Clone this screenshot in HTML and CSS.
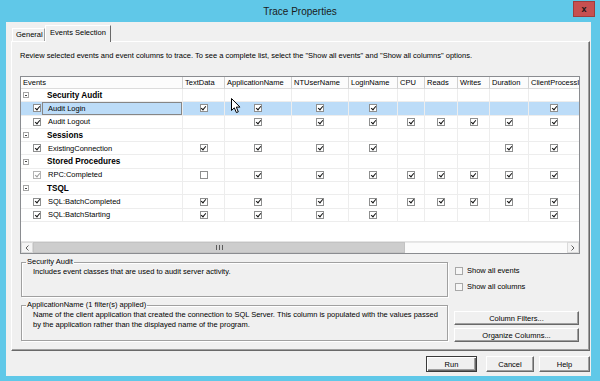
FILE: index.html
```html
<!DOCTYPE html>
<html lang="en">
<head>
    <meta charset="UTF-8">
    <title>Trace Properties</title>
    <link rel="stylesheet" href="styles.css">
</head>
<body>
    <div class="window">
        <div class="titlebar">
            <span class="title">Trace Properties</span>
            <span class="close">x</span>
        </div>

        <div class="client">
            <div class="tabs">
                <span class="tab">General</span>
                <span class="tab active">Events Selection</span>
            </div>

            <div class="panel">
                <p class="intro">Review selected events and event columns to trace. To see a complete list, select the "Show all events" and "Show all columns" options.</p>

                <!-- events / columns grid -->
                <div class="grid">
                    <div class="row head">
                        <div class="c">Events</div>
                        <div class="c">TextData</div>
                        <div class="c">ApplicationName</div>
                        <div class="c">NTUserName</div>
                        <div class="c">LoginName</div>
                        <div class="c">CPU</div>
                        <div class="c">Reads</div>
                        <div class="c">Writes</div>
                        <div class="c">Duration</div>
                        <div class="c">ClientProcessID</div>
                    </div>

                    <div class="row">
                        <div class="c ev"><span class="tog"></span><b class="cat">Security Audit</b></div>
                        <div class="c"></div><div class="c"></div><div class="c"></div><div class="c"></div><div class="c"></div><div class="c"></div><div class="c"></div><div class="c"></div><div class="c"></div>
                    </div>
                    <div class="row sel">
                        <div class="c ev item"><span class="cb on"></span><span class="name">Audit Login</span></div>
                        <div class="c"><span class="cb on"></span></div>
                        <div class="c"><span class="cb on"></span></div>
                        <div class="c"><span class="cb on"></span></div>
                        <div class="c"><span class="cb on"></span></div>
                        <div class="c"></div>
                        <div class="c"></div>
                        <div class="c"></div>
                        <div class="c"></div>
                        <div class="c"><span class="cb on"></span></div>
                    </div>
                    <div class="row">
                        <div class="c ev item"><span class="cb on"></span><span class="name">Audit Logout</span></div>
                        <div class="c"></div>
                        <div class="c"><span class="cb on"></span></div>
                        <div class="c"><span class="cb on"></span></div>
                        <div class="c"><span class="cb on"></span></div>
                        <div class="c"><span class="cb on"></span></div>
                        <div class="c"><span class="cb on"></span></div>
                        <div class="c"><span class="cb on"></span></div>
                        <div class="c"><span class="cb on"></span></div>
                        <div class="c"><span class="cb on"></span></div>
                    </div>

                    <div class="row">
                        <div class="c ev"><span class="tog"></span><b class="cat">Sessions</b></div>
                        <div class="c"></div><div class="c"></div><div class="c"></div><div class="c"></div><div class="c"></div><div class="c"></div><div class="c"></div><div class="c"></div><div class="c"></div>
                    </div>
                    <div class="row">
                        <div class="c ev item"><span class="cb on"></span><span class="name">ExistingConnection</span></div>
                        <div class="c"><span class="cb on"></span></div>
                        <div class="c"><span class="cb on"></span></div>
                        <div class="c"><span class="cb on"></span></div>
                        <div class="c"><span class="cb on"></span></div>
                        <div class="c"></div>
                        <div class="c"></div>
                        <div class="c"></div>
                        <div class="c"><span class="cb on"></span></div>
                        <div class="c"><span class="cb on"></span></div>
                    </div>

                    <div class="row">
                        <div class="c ev"><span class="tog"></span><b class="cat">Stored Procedures</b></div>
                        <div class="c"></div><div class="c"></div><div class="c"></div><div class="c"></div><div class="c"></div><div class="c"></div><div class="c"></div><div class="c"></div><div class="c"></div>
                    </div>
                    <div class="row">
                        <div class="c ev item"><span class="cb on off"></span><span class="name">RPC:Completed</span></div>
                        <div class="c"><span class="cb"></span></div>
                        <div class="c"><span class="cb on"></span></div>
                        <div class="c"><span class="cb on"></span></div>
                        <div class="c"><span class="cb on"></span></div>
                        <div class="c"><span class="cb on"></span></div>
                        <div class="c"><span class="cb on"></span></div>
                        <div class="c"><span class="cb on"></span></div>
                        <div class="c"><span class="cb on"></span></div>
                        <div class="c"><span class="cb on"></span></div>
                    </div>

                    <div class="row">
                        <div class="c ev"><span class="tog"></span><b class="cat">TSQL</b></div>
                        <div class="c"></div><div class="c"></div><div class="c"></div><div class="c"></div><div class="c"></div><div class="c"></div><div class="c"></div><div class="c"></div><div class="c"></div>
                    </div>
                    <div class="row">
                        <div class="c ev item"><span class="cb on"></span><span class="name">SQL:BatchCompleted</span></div>
                        <div class="c"><span class="cb on"></span></div>
                        <div class="c"><span class="cb on"></span></div>
                        <div class="c"><span class="cb on"></span></div>
                        <div class="c"><span class="cb on"></span></div>
                        <div class="c"><span class="cb on"></span></div>
                        <div class="c"><span class="cb on"></span></div>
                        <div class="c"><span class="cb on"></span></div>
                        <div class="c"><span class="cb on"></span></div>
                        <div class="c"><span class="cb on"></span></div>
                    </div>
                    <div class="row">
                        <div class="c ev item"><span class="cb on"></span><span class="name">SQL:BatchStarting</span></div>
                        <div class="c"><span class="cb on"></span></div>
                        <div class="c"><span class="cb on"></span></div>
                        <div class="c"><span class="cb on"></span></div>
                        <div class="c"><span class="cb on"></span></div>
                        <div class="c"></div>
                        <div class="c"></div>
                        <div class="c"></div>
                        <div class="c"></div>
                        <div class="c"><span class="cb on"></span></div>
                    </div>

                    <div class="filler"></div>

                    <div class="hscroll">
                        <span class="arrow"><svg width="4" height="6" viewBox="0 0 4 6"><polyline points="3.5,0.5 1,3 3.5,5.5" fill="none" stroke="#606060" stroke-width="1"/></svg></span>
                        <span class="thumb"><span class="grip"></span></span>
                        <span class="track"></span>
                        <span class="arrow"><svg width="4" height="6" viewBox="0 0 4 6"><polyline points="0.5,0.5 3,3 0.5,5.5" fill="none" stroke="#606060" stroke-width="1"/></svg></span>
                    </div>
                </div>

                <div class="lower">
                    <div class="groups">
                        <fieldset class="group first">
                            <legend>Security Audit</legend>
                            <p>Includes event classes that are used to audit server activity.</p>
                        </fieldset>
                        <fieldset class="group">
                            <legend>ApplicationName (1 filter(s) applied)</legend>
                            <p>Name of the client application that created the connection to SQL Server. This column is populated with the values passed<br>by the application rather than the displayed name of the program.</p>
                        </fieldset>
                    </div>
                    <div class="side">
                        <label class="opt"><span class="cb plain"></span>Show all events</label>
                        <label class="opt"><span class="cb plain"></span>Show all columns</label>
                        <button class="btn wide first">Column Filters...</button>
                        <button class="btn wide">Organize Columns...</button>
                    </div>
                </div>
            </div>

            <div class="actions">
                <button class="btn default">Run</button>
                <button class="btn cancel">Cancel</button>
                <button class="btn">Help</button>
            </div>
        </div>

        <!-- mouse pointer caught in the capture -->
        <svg class="pointer" width="10" height="16" viewBox="0 0 10 16">
            <path d="M0.5,0.5 L0.5,12.5 L3.3,9.8 L5.4,14.6 L7.3,13.8 L5.3,9.1 L9,9.1 Z" fill="#fff" stroke="#000" stroke-width="1" stroke-linejoin="round"/>
        </svg>
    </div>
</body>
</html>
```

FILE: styles.css
```css
* {
    box-sizing: border-box;
}
body {
    margin: 0;
    background: #60c8e8;
    font-family: "Liberation Sans", Arial, sans-serif;
    font-size: 7.5px;
    color: #000;
}
.window {
    width: 600px;
    height: 381px;
    background: #60c8e8; /* window frame */
    position: relative;
    overflow: hidden;
}
.titlebar {
    height: 22px;
    display: flex;
    align-items: center;
    justify-content: center;
}
.title {
    font-size: 10px;
    color: #1b1b1b;
}
.close {
    position: absolute;
    top: 1px;
    right: 5px;
    width: 22px;
    height: 16px;
    background: #c75050;
    border: 1px solid #9e3d3d;
    display: flex;
    align-items: center;
    justify-content: center;
    font-weight: bold;
    font-size: 9px;
    color: #161616;
}
.client {
    margin: 0 9px 0 6px;
    height: 354px;
    background: #f0f0f0;
    display: flex;
    flex-direction: column;
}

/* tabs */
.tabs {
    height: 19px;
    display: flex;
    align-items: flex-end;
    padding-left: 6px;
}
.tab {
    height: 13px;
    width: 33px;
    padding-left: 3px;
    line-height: 12px;
    border: 1px solid;
    border-color: #fff #a0a0a0 transparent #fff;
    border-bottom: 0;
}
.tab.active {
    width: 66px;
    height: 17px;
    padding-left: 4px;
    line-height: 14px;
    margin-bottom: -1px;
    position: relative;
    z-index: 1;
    background: #f0f0f0;
    border-right-color: #696969;
}
.panel {
    margin-left: 5px;
    width: 579px;
    height: 310px;
    border: 1px solid;
    border-color: #fff #696969 #696969 #fff;
    box-shadow: inset -1px -1px #a0a0a0;
    padding: 0 8px;
}
.intro {
    margin: 9px 0 0;
    line-height: 10px;
    white-space: nowrap;
}

/* grid */
.grid {
    margin-top: 15px;
    width: 560px;
    height: 178px;
    border: 1px solid #8a8c90;
    background: #fff;
    display: flex;
    flex-direction: column;
}
.row {
    display: grid;
    grid-template-columns: 162px 42px 67px 57px 49px 27px 33px 32px 39px 50px;
    height: 13.3px;
    flex: none;
}
.row.head {
    height: 12px;
}
.c {
    border-right: 1px solid #ededed;
    border-bottom: 1px solid #ededed;
    display: flex;
    align-items: center;
    justify-content: center;
    overflow: hidden;
    white-space: nowrap;
}
.c:last-child {
    border-right: 0;
}
.head .c {
    justify-content: flex-start;
    padding-left: 2px;
    background: #fcfcfc;
    border-right-color: #d0d0d0;
    border-bottom-color: #dcdcdc;
}
.head .c:last-child {
    border-right: 0;
}
.row.sel {
    background: #bcdcf8;
}
.c.ev {
    justify-content: flex-start;
    padding-left: 2px;
}
.c.item {
    padding-left: 12px;
}
.tog {
    width: 6px;
    height: 6px;
    border: 1px solid #a6a6a6;
    background: #fff;
    position: relative;
    flex: none;
}
.tog::after {
    content: "";
    position: absolute;
    left: 1px;
    top: 1.5px;
    width: 2px;
    height: 1px;
    background: #444;
}
.cat {
    margin-left: 18px;
    font-size: 8.2px;
}
.name {
    align-self: stretch;
    flex: 1;
    display: flex;
    align-items: center;
    margin-left: 1px;
    padding-left: 5px;
    border: 1px solid transparent;
}
.sel .name {
    border-color: #868686;
}

/* checkboxes */
.cb {
    width: 8px;
    height: 8px;
    border: 1px solid #8e8f8f;
    background: #fff;
    position: relative;
    flex: none;
}
.cb.on::after {
    content: "";
    position: absolute;
    left: 1.6px;
    top: -0.2px;
    width: 2px;
    height: 4px;
    border: solid #141414;
    border-width: 0 1.5px 1.5px 0;
    transform: rotate(40deg);
}
.cb.off {
    border-color: #b4b4b4;
}
.cb.off::after {
    border-color: #9a9a9a;
}
.cb.plain {
    border-color: #a8a8a8;
    background: #f6f6f6;
}
.filler {
    flex: 1;
}

/* horizontal scroll bar */
.hscroll {
    height: 12px;
    display: flex;
    flex: none;
    background: #fbfbfb;
    border-top: 1px solid #e4e4e4;
}
.arrow {
    width: 12px;
    display: flex;
    align-items: center;
    justify-content: center;
    background: #f4f4f4;
    border: 1px solid #dadada;
}
.thumb {
    width: 372px;
    background: #cdcdcd;
    border: 1px solid #c3c3c3;
    display: flex;
    align-items: center;
    justify-content: center;
}
.grip {
    width: 7px;
    height: 5px;
    background: repeating-linear-gradient(to right, #5c5c5c 0 1px, transparent 1px 3px);
}
.track {
    flex: 1;
    border-top: 1px solid #e8e8e8;
}

/* lower area */
.lower {
    display: flex;
}
.groups {
    margin-left: 1px;
    width: 427px;
}
.group {
    margin: 3px 0 0;
    height: 40px;
    padding: 0 0 0 11px;
    border: 1px solid #a0a0a0;
    box-shadow: inset 1px 1px #fff, 1px 1px #fff;
}
.group + .group {
    height: 41px;
}
.group legend {
    margin-left: -7px;
    padding: 0 1px;
    line-height: 10px;
}
.group p {
    margin: 0;
    line-height: 10px;
    white-space: nowrap;
}
.side {
    margin-left: 6px;
    width: 125px;
    padding-top: 13px;
    display: flex;
    flex-direction: column;
}
.opt {
    height: 16px;
    display: flex;
    align-items: flex-start;
    padding-left: 1px;
    line-height: 8px;
}
.opt .cb {
    margin-right: 4px;
}

/* buttons */
.btn {
    font: inherit;
    color: #000;
    height: 16px;
    padding: 0;
    background: #f0f0f0;
    border: 1px solid;
    border-color: #fff #696969 #696969 #fff;
    box-shadow: inset -1px -1px #a0a0a0;
}
.btn.wide {
    width: 125px;
    height: 14px;
    margin-top: 3px;
}
.btn.wide.first {
    margin-top: 12px;
}
.actions {
    display: flex;
    justify-content: flex-end;
    margin-top: 5px;
    padding-right: 1px;
}
.actions .btn {
    width: 51px;
}
.btn.default {
    border-color: #3a3a3a;
    box-shadow: inset 1px 1px #fff, inset -1px -1px #696969, inset -2px -2px #a0a0a0;
    margin-right: 9px;
}
.btn.cancel {
    width: 48px;
    margin-right: 5px;
}
.pointer {
    position: absolute;
    left: 231px;
    top: 98px;
}
```
